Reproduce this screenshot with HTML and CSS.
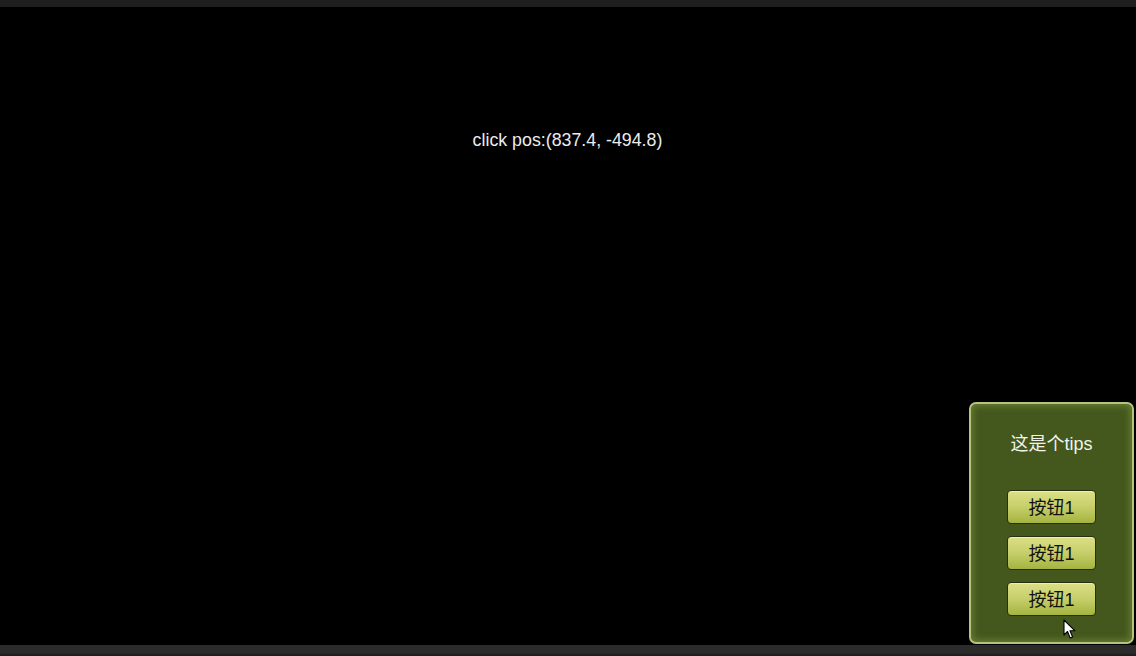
FILE: index.html
```html
<!DOCTYPE html>
<html lang="zh">
<head>
<meta charset="utf-8">
<title>tips</title>
<link rel="stylesheet" href="styles.css">
</head>
<body>
<div class="app">
  <div class="topbar"></div>
  <div class="stage">
    <div class="pos">click pos:(837.4, -494.8)</div>
    <div class="tips">
      <div class="tips-title">这是个tips</div>
      <div class="tips-buttons">
        <div class="btn">按钮1</div>
        <div class="btn">按钮1</div>
        <div class="btn">按钮1</div>
      </div>
      <svg class="cursor" width="14" height="21" viewBox="0 0 14 21">
        <path d="M1 1 L1 16 L4.5 12.5 L7.2 19 L9.6 18 L7 11.8 L12 11.8 Z" fill="#ffffff" stroke="#000000" stroke-width="1.1" stroke-linejoin="round"/>
      </svg>
    </div>
  </div>
  <div class="bottombar"></div>
</div>
</body>
</html>
```

FILE: styles.css
```css
html, body {
  margin: 0;
  padding: 0;
  background: #000;
}
.app {
  width: 1136px;
  height: 656px;
  display: flex;
  flex-direction: column;
  overflow: hidden;
  font-family: "Liberation Sans", "Noto Sans CJK SC", sans-serif;
}
.topbar {
  height: 7px;
  background: #1f1f20;
  flex: none;
}
.stage {
  flex: 1;
  background: #000;
  display: flex;
  flex-direction: column;
  align-items: center;
  padding-top: 123px;
}
.pos {
  color: #ececec;
  font-size: 17.8px;
  line-height: 20px;
  height: 20px;
  margin-left: -1px;
}
.tips {
  margin-top: auto;
  margin-bottom: 1px;
  align-self: flex-end;
  margin-right: 2px;
  width: 161px;
  height: 238px;
  border: 2px solid #b3c47c;
  border-radius: 7px;
  background: #44581e;
  box-shadow: inset 0 0 6px 2px #6a7d34;
  box-sizing: content-box;
  display: flex;
  flex-direction: column;
  align-items: center;
  position: relative;
}
.tips-title {
  margin-top: 30px;
  color: #f2f4ea;
  font-size: 18px;
  line-height: 20px;
  height: 20px;
}
.tips-buttons {
  margin-top: 36px;
  display: flex;
  flex-direction: column;
  gap: 12px;
}
.btn {
  width: 87px;
  height: 32px;
  border: 1px solid #283010;
  border-radius: 4px;
  background: linear-gradient(to bottom, #dcdf86 0%, #c6ce6a 50%, #a4b440 100%);
  box-shadow: inset 0 1px 0 #eef0a8;
  color: #111;
  font-size: 18px;
  line-height: 34px;
  height: 32px;
  text-align: center;
  overflow: hidden;
}
.cursor {
  position: absolute;
  left: 92px;
  top: 215px;
}
.bottombar {
  height: 11px;
  flex: none;
  background: linear-gradient(to bottom, #2b2b2b 0%, #2b2b2b 70%, #1a1a1a 100%);
}
```
